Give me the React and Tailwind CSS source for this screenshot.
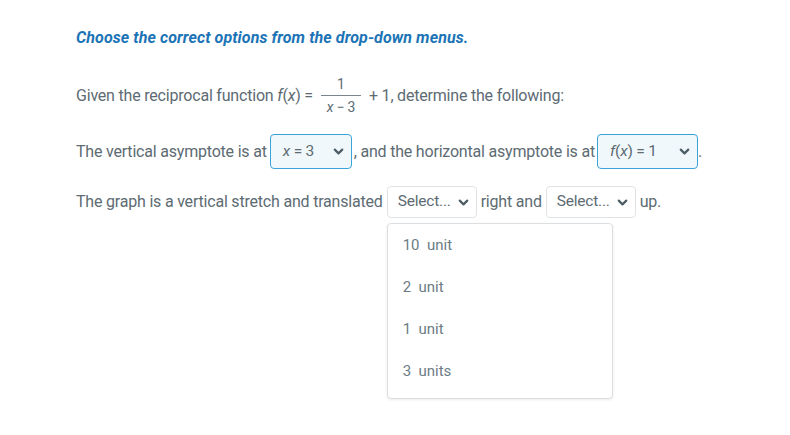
import React from 'react';
import { ChevronDown } from 'lucide-react';

const font = { fontFamily: 'Roboto, "Liberation Sans", sans-serif' };

const Frac = () => (
  <span className="inline-flex flex-col items-center mx-[8px] leading-none">
    <span className="text-[14px] pb-[4px]">1</span>
    <span className="block h-px w-[40px] bg-[#7a868c]" />
    <span className="text-[14px] pt-[4px]"><i>x</i> − 3</span>
  </span>
);

const Select = ({ children, active, w }) => (
  <span
    className={
      'inline-flex items-center justify-between rounded-[4px] border pl-[10px] pr-[5px] ' +
      (active ? 'h-[35px] border-[#3aa3d8] bg-[#f0f8fc] ' : 'h-[32px] border-[#dfe3e5] bg-white ') +
      w
    }
  >
    <span className="text-[15.5px] text-[#5d6b73]">{children}</span>
    <ChevronDown size={15} strokeWidth={3.5} className="text-[#4d5d66]" />
  </span>
);

export default function App() {
  return (
    <div className="min-h-[435px] bg-white pl-[76px] pt-[26px] text-[#5d6b73] tracking-[-0.2px]" style={font}>
      <h1 className="text-[16px] font-bold italic tracking-[0.1px] text-[#1c74b6]">
        Choose the correct options from the drop-down menus.
      </h1>

      <div className="mt-[27px] flex items-center text-[16px]">
        <span>Given the reciprocal function <i>f</i>(<i>x</i>) =</span>
        <Frac />
        <span>+ 1, determine the following:</span>
      </div>

      <div className="mt-[20px] flex items-center text-[16px]">
        <span className="mr-[3px]">The vertical asymptote is at</span>
        <Select active w="w-[82px]">
          <span className="pl-[2px]"><i>x</i> = 3</span>
        </Select>
        <span className="mx-[2px]">, and the horizontal asymptote is at</span>
        <Select active w="w-[101px]">
          <span className="pl-[2px]"><i>f</i>(<i>x</i>) = 1</span>
        </Select>
        <span>.</span>
      </div>

      <div className="mt-[17px] flex items-center text-[16px]">
        <span className="mr-[4px]">The graph is a vertical stretch and translated</span>
        <span className="relative">
          <Select w="w-[90px]">Select...</Select>
          <div className="absolute left-0 top-[37px] z-10 w-[226px] rounded-[4px] border border-[#dcdfe1] bg-white pb-[6px] shadow-[0_1px_3px_rgba(0,0,0,0.08)]">
            {['10  unit', '2  unit', '1  unit', '3  units'].map((t) => (
              <div key={t} className="flex h-[42px] items-center whitespace-pre pl-[15px] text-[15px] tracking-normal text-[#6b7c84]">
                {t}
              </div>
            ))}
          </div>
        </span>
        <span className="mx-[4px]">right and</span>
        <Select w="w-[90px]">Select...</Select>
        <span className="ml-[4px]">up.</span>
      </div>
    </div>
  );
}
